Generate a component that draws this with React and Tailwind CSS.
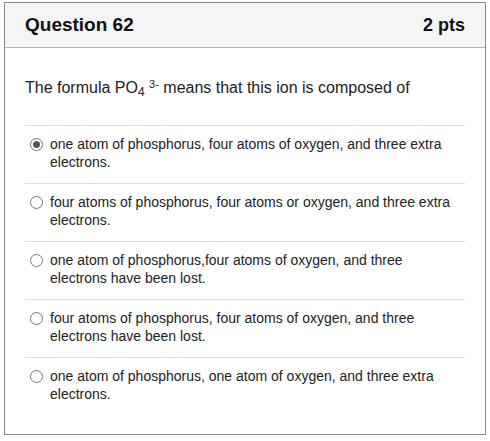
import React from "react";

const answers = [
  { text: "one atom of phosphorus, four atoms of oxygen, and three extra electrons.", selected: true },
  { text: "four atoms of phosphorus, four atoms or oxygen, and three extra electrons." },
  { text: "one atom of phosphorus,four atoms of oxygen, and three electrons have been lost." },
  { text: "four atoms of phosphorus, four atoms of oxygen, and three electrons have been lost." },
  { text: "one atom of phosphorus, one atom of oxygen, and three extra electrons." },
];

function Radio({ selected }) {
  return (
    <span className="relative mt-[3px] ml-[5px] flex h-[13px] w-[13px] shrink-0 items-center justify-center rounded-full border border-[#767676] bg-white">
      {selected && <span className="h-[7px] w-[7px] rounded-full bg-[#555]" />}
    </span>
  );
}

export default function App() {
  return (
    <div className="h-[441px] w-[490px] bg-white pl-[4px] pt-[2px]" style={{ fontFamily: '"Liberation Sans", Arial, sans-serif' }}>
      <div className="flex h-[433px] w-[482px] flex-col border border-[#8a8a8a]">
        <div className="flex h-[45px] items-center justify-between border-b border-[#b5b5b5] bg-[#f5f5f5] px-[20px] pt-[1px]">
          <span className="text-[19px] font-bold text-[#111]">Question 62</span>
          <span className="text-[18px] font-bold text-[#111]">2 pts</span>
        </div>
        <div className="px-[20px] pt-[30px]">
          <p className="text-[16px] leading-[20px] text-[#222]">
            The formula PO<sub className="text-[12px]">4</sub> <sup className="text-[11px]">3-</sup> means that this ion is composed of
          </p>
          <div className="mt-[27px]">
            {answers.map((a, i) => (
              <div key={i} className="flex gap-[7px] border-t border-[#dcdcdc] pt-[9px] pb-[12px] pr-[8px]">
                <Radio selected={a.selected} />
                <span className="text-[14px] leading-[18px] text-[#222]">{a.text}</span>
              </div>
            ))}
          </div>
        </div>
      </div>
    </div>
  );
}
